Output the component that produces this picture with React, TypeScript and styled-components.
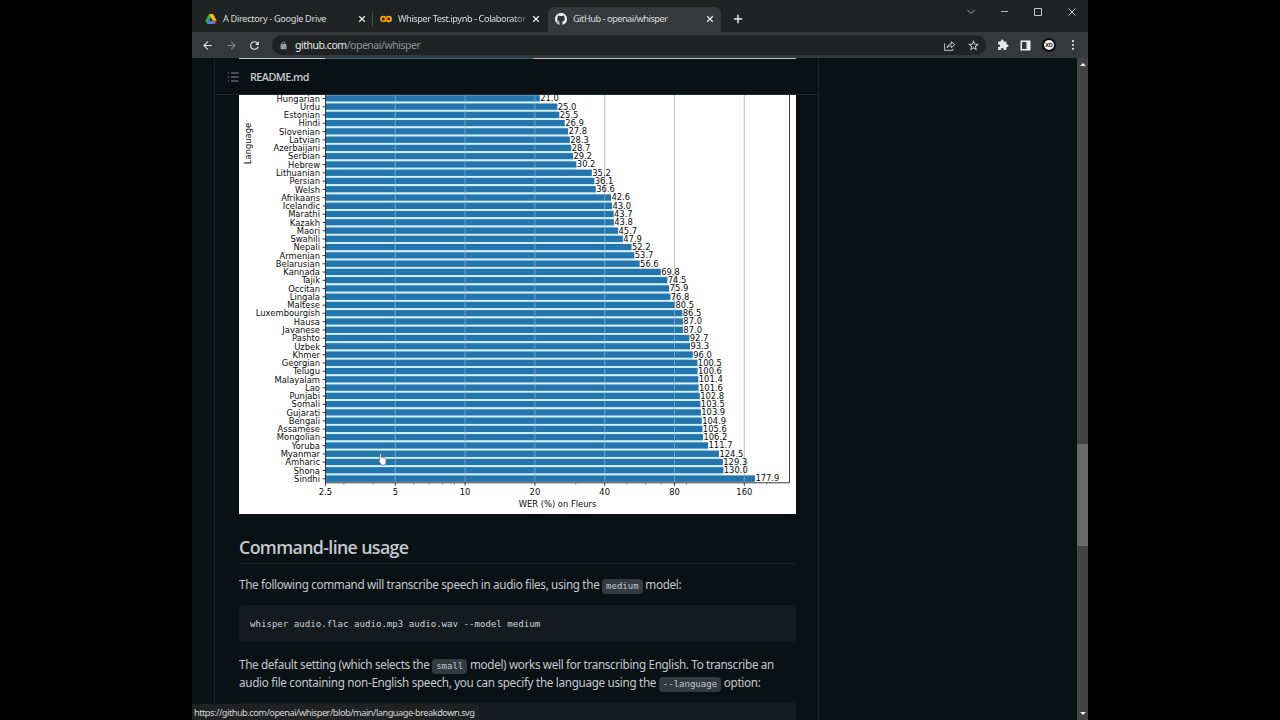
import React from "react";
import styled, { createGlobalStyle } from "styled-components";

const Global = createGlobalStyle`
  * { box-sizing: border-box; }
  body { margin: 0; background: #000; overflow: hidden; }
`;

const UI_FONT = `"Noto Sans", "Open Sans", sans-serif`;
const MONO_FONT = `"DejaVu Sans Mono", "Liberation Mono", monospace`;

const Desktop = styled.div`
  width: 1280px;
  height: 720px;
  background: #000;
  display: flex;
  justify-content: center;
  font-family: ${UI_FONT};
`;
const Browser = styled.div`
  width: 896px;
  height: 720px;
  display: flex;
  flex-direction: column;
  position: relative;
  background: #0a1114;
`;
const TabStrip = styled.div`
  height: 32px;
  flex: none;
  background: #202323;
  display: flex;
  align-items: flex-end;
`;
const Tab = styled.div<{ $w: number; $left: number; $right: number; $active?: boolean; $divider?: boolean }>`
  width: ${(p) => p.$w}px;
  height: 25px;
  padding: 0 ${(p) => p.$right}px 1px ${(p) => p.$left}px;
  display: flex;
  align-items: center;
  background: ${(p) => (p.$active ? "#36393b" : "transparent")};
  border-radius: 6px 6px 0 0;
  background-image: ${(p) => (p.$divider ? "linear-gradient(#4a4d50, #4a4d50)" : "none")};
  background-size: 1px 15px;
  background-position: right 5px;
  background-repeat: no-repeat;
`;
const TabTitle = styled.span<{ $ls: number; $fade?: boolean }>`
  margin-left: 6px;
  padding-bottom: 1px;
  flex: 1;
  min-width: 0;
  white-space: nowrap;
  font-size: 9.2px;
  line-height: 14px;
  letter-spacing: ${(p) => p.$ls}px;
  color: #dadcde;
  ${(p) => p.$fade && "mask-image: linear-gradient(90deg, #000 86%, rgba(0,0,0,.25) 97%);"}
`;
const NewTab = styled.div`
  width: 34px;
  height: 25px;
  padding-bottom: 1px;
  display: flex;
  align-items: center;
  justify-content: center;
`;
const WindowControls = styled.div`
  margin-left: auto;
  align-self: flex-start;
  height: 23px;
  display: flex;
  align-items: center;
  gap: 22px;
  padding-right: 10px;
`;
const Toolbar = styled.div`
  height: 26px;
  flex: none;
  background: #36393b;
  display: flex;
  align-items: center;
  padding: 0 9px 0 9px;
`;
const NavIcons = styled.div`
  width: 71px;
  display: flex;
  gap: 10.5px;
`;
const Omnibox = styled.div`
  width: 714px;
  height: 20px;
  border-radius: 10px;
  background: #202324;
  display: flex;
  align-items: center;
  padding: 0 6px 0 7px;
`;
const Url = styled.span`
  margin-left: 7px;
  flex: 1;
  font-size: 10.5px;
  line-height: 14px;
  letter-spacing: -0.48px;
  color: #e6e8ea;
  white-space: nowrap;
`;
const UrlPath = styled.span`
  color: #8d9195;
`;
const OmniActions = styled.div`
  display: flex;
  gap: 11px;
`;
const Extensions = styled.div`
  display: flex;
  align-items: center;
  justify-content: space-between;
  width: 82px;
  margin-left: 11px;
`;
const Avatar = styled.div`
  width: 14px;
  height: 14px;
  flex: none;
  border-radius: 50%;
  border: 2px solid #0a0a0a;
  background: #f2f2f2;
  color: #111;
  font: bold 5.5px/10px "Liberation Sans", sans-serif;
  text-align: center;
`;
const Viewport = styled.div`
  flex: 1;
  min-height: 0;
  display: flex;
`;
const Page = styled.div`
  flex: 1;
  overflow: hidden;
  padding-left: 22px;
`;
const ReadmeBox = styled.article`
  width: 605px;
  height: 662px;
  border: solid #1c2226;
  border-width: 0 1px;
  overflow: hidden;
`;
const ChartEdge = styled.div`
  height: 1px;
  margin: 0 22px 0 24px;
  background: linear-gradient(90deg, #c4c8ca 86px, #2f6488 86px, #2f6488 294px, #b9bdbf 294px);
`;
const ReadmeHeader = styled.header`
  height: 36px;
  border-bottom: 1px solid #22282c;
  display: flex;
  align-items: center;
  padding: 0 0 0 12px;
  gap: 11px;
`;
const FileName = styled.span`
  font-family: "Open Sans", "Noto Sans", sans-serif;
  font-size: 10.8px;
  font-weight: 600;
  line-height: 16px;
  letter-spacing: -0.55px;
  color: #c6cbd0;
`;
const Markdown = styled.div`
  padding: 0 22px 0 24px;
  color: #c3c9ce;
`;
const ChartSvg = styled.svg`
  display: block;
  width: 557px;
  height: 419px;
  background: #fff;
  font-family: "DejaVu Sans", sans-serif;
`;
const Heading = styled.h2`
  margin: 22px 0 11px;
  height: 28px;
  border-bottom: 1px solid #192024;
  font-family: "Open Sans", "Noto Sans", sans-serif;
  font-size: 17.8px;
  font-weight: 600;
  line-height: 23px;
  letter-spacing: -0.64px;
`;
const Paragraph = styled.p<{ $after: number }>`
  margin: 0 0 ${(p) => p.$after}px;
  font-size: 11.7px;
  line-height: 18px;
  white-space: nowrap;
`;
const Line = styled.span<{ $ls: number }>`
  display: block;
  height: 18px;
  letter-spacing: ${(p) => p.$ls}px;
`;
const Code = styled.code`
  padding: 2px 4px 3px;
  border-radius: 4px;
  background: #343a40;
  font-family: ${MONO_FONT};
  font-size: 9px;
  line-height: 10px;
  letter-spacing: 0;
`;
const Pre = styled.pre`
  height: 37px;
  margin: 0 0 13px;
  padding: 0 11px;
  border-radius: 4px;
  background: #141a1e;
  font-family: ${MONO_FONT};
  font-size: 9.1px;
  line-height: 38px;
  color: #d0d5d9;
`;
const ScrollTrack = styled.div`
  width: 11px;
  flex: none;
  background: #424344;
  display: flex;
  flex-direction: column;
  align-items: center;
`;
const ScrollArrow = styled.div<{ $down?: boolean }>`
  margin: ${(p) => (p.$down ? "auto 0 5px" : "5px 0 0")};
  border: solid transparent;
  border-width: ${(p) => (p.$down ? "3px 3px 0" : "0 3px 3px")};
  border-${(p) => (p.$down ? "top" : "bottom")}-color: #f0f0f0;
`;
const ScrollThumb = styled.div`
  width: 11px;
  height: 102px;
  margin-top: 378px;
  background: #696a6c;
`;
const StatusBubble = styled.div`
  position: absolute;
  left: 0;
  bottom: 0;
  height: 16px;
  width: 287px;
  padding-left: 2px;
  background: #1f2122;
  border-top-right-radius: 3px;
  color: #d5d7d9;
  font-size: 9.2px;
  line-height: 17px;
  letter-spacing: -0.48px;
  white-space: nowrap;
`;
const Pointer = styled.svg`
  position: absolute;
  left: 186px;
  top: 453px;
`;

const DriveIcon = () => (
  <svg width="12" height="12" viewBox="0 0 24 24">
    <path d="M8 2h8l-4 7z" fill="#188038" />
    <path d="M8 2 0.5 15.5 4.5 22 12 9z" fill="#34a853" />
    <path d="M8 2h8l7.5 13.5h-8z" fill="#fbbc04" />
    <path d="M4.5 22 8.3 15.5h7.4L19.5 22z" fill="#4285f4" />
    <path d="M15.5 15.5h8L19.5 22z" fill="#ea4335" />
  </svg>
);
const ColabIcon = () => (
  <svg width="12" height="12" viewBox="0 0 24 24" fill="none" strokeWidth="3.6">
    <circle cx="6.6" cy="12" r="4.6" stroke="#f9ab00" />
    <circle cx="17.4" cy="12" r="4.6" stroke="#f9ab00" />
    <path d="M3.4 15.3a4.6 4.6 0 0 0 6.4 0M14.2 8.7a4.6 4.6 0 0 0 0 6.6" stroke="#e8710a" />
  </svg>
);
const GithubIcon = () => (
  <svg width="12" height="12" viewBox="0 0 16 16" fill="#f5f6f7">
    <path d="M8 0C3.58 0 0 3.58 0 8c0 3.54 2.29 6.53 5.47 7.59.4.07.55-.17.55-.38 0-.19-.01-.82-.01-1.49-2.01.37-2.53-.49-2.69-.94-.09-.23-.48-.94-.82-1.13-.28-.15-.68-.52-.01-.53.63-.01 1.08.58 1.23.82.72 1.21 1.87.87 2.33.66.07-.52.28-.87.51-1.07-1.78-.2-3.64-.89-3.64-3.95 0-.87.31-1.59.82-2.15-.08-.2-.36-1.02.08-2.12 0 0 .67-.21 2.2.82.64-.18 1.32-.27 2-.27s1.36.09 2 .27c1.53-1.04 2.2-.82 2.2-.82.44 1.1.16 1.92.08 2.12.51.56.82 1.27.82 2.15 0 3.07-1.87 3.75-3.65 3.95.29.25.54.73.54 1.48 0 1.07-.01 1.93-.01 2.2 0 .21.15.46.55.38A8.01 8.01 0 0 0 16 8c0-4.42-3.58-8-8-8z" />
  </svg>
);
const CloseIcon = () => (
  <svg width="10" height="10" viewBox="0 0 10 10" stroke="#e4e6e8" strokeWidth="1.3">
    <path d="M2.2 2.2l5.6 5.6M7.8 2.2L2.2 7.8" />
  </svg>
);
const MaterialIcon = ({ d, size = 13, color = "#e4e6e8" }: { d: string; size?: number; color?: string }) => (
  <svg width={size} height={size} viewBox="0 0 24 24" fill={color}>
    <path d={d} />
  </svg>
);
const ICONS = {
  back: "M20 11H7.83l5.59-5.59L12 4l-8 8 8 8 1.41-1.41L7.83 13H20v-2z",
  forward: "M12 4l-1.41 1.41L16.17 11H4v2h12.17l-5.58 5.59L12 20l8-8z",
  reload:
    "M17.65 6.35A7.96 7.96 0 0 0 12 4a8 8 0 1 0 7.73 10h-2.08A6 6 0 1 1 12 6c1.66 0 3.14.69 4.22 1.78L13 11h7V4l-2.35 2.35z",
  lock: "M18 8h-1V6A5 5 0 0 0 7 6v2H6a2 2 0 0 0-2 2v10c0 1.1.9 2 2 2h12a2 2 0 0 0 2-2V10a2 2 0 0 0-2-2zM9 6a3 3 0 0 1 6 0v2H9V6z",
  star: "M22 9.24l-7.19-.62L12 2 9.19 8.63 2 9.24l5.46 4.73L5.82 21 12 17.27 18.18 21l-1.63-7.03L22 9.24zM12 15.4l-3.76 2.27 1-4.28-3.32-2.88 4.38-.38L12 6.1l1.71 4.04 4.38.38-3.32 2.88 1 4.28L12 15.4z",
  puzzle:
    "M20.5 11H19V7a2 2 0 0 0-2-2h-4V3.5a2.5 2.5 0 0 0-5 0V5H4a2 2 0 0 0-2 2v3.8h1.5a2.7 2.7 0 0 1 0 5.4H2V20c0 1.1.9 2 2 2h3.8v-1.5a2.7 2.7 0 0 1 5.4 0V22H17a2 2 0 0 0 2-2v-4h1.5a2.5 2.5 0 0 0 0-5z",
  more: "M12 6.5a2.2 2.2 0 1 0 0-4.4 2.2 2.2 0 0 0 0 4.4zm0 3.3a2.2 2.2 0 1 0 0 4.4 2.2 2.2 0 0 0 0-4.4zm0 7.7a2.2 2.2 0 1 0 0 4.4 2.2 2.2 0 0 0 0-4.4z",
};

const DATA: [string, number][] = [
  ["Hungarian", 21.0], ["Urdu", 25.0], ["Estonian", 25.5], ["Hindi", 26.9], ["Slovenian", 27.8],
  ["Latvian", 28.3], ["Azerbaijani", 28.7], ["Serbian", 29.2], ["Hebrew", 30.2], ["Lithuanian", 35.2],
  ["Persian", 36.1], ["Welsh", 36.6], ["Afrikaans", 42.6], ["Icelandic", 43.0], ["Marathi", 43.7],
  ["Kazakh", 43.8], ["Maori", 45.7], ["Swahili", 47.9], ["Nepali", 52.2], ["Armenian", 53.7],
  ["Belarusian", 56.6], ["Kannada", 69.8], ["Tajik", 74.5], ["Occitan", 75.9], ["Lingala", 76.8],
  ["Maltese", 80.5], ["Luxembourgish", 86.5], ["Hausa", 87.0], ["Javanese", 87.0], ["Pashto", 92.7],
  ["Uzbek", 93.3], ["Khmer", 96.0], ["Georgian", 100.5], ["Telugu", 100.6], ["Malayalam", 101.4],
  ["Lao", 101.6], ["Punjabi", 102.8], ["Somali", 103.5], ["Gujarati", 103.9], ["Bengali", 104.9],
  ["Assamese", 105.6], ["Mongolian", 106.2], ["Yoruba", 111.7], ["Myanmar", 124.5], ["Amharic", 129.3],
  ["Shona", 130.0], ["Sindhi", 177.9],
];
const AXIS_X = 86.5;
const AXIS_Y = 387.8;
const RIGHT_X = 550.5;
const xOf = (v: number) => AXIS_X + Math.log2(v / 2.5) * 69.8;
const rowY = (i: number) => 3.5 + i * 8.265;
const MAJOR = [2.5, 5, 10, 20, 40, 80, 160];
const MINOR = [3, 4, 6, 7, 8, 9, 30, 50, 60, 70, 90, 200];

const WerChart = () => (
  <ChartSvg viewBox="0 0 557 419">
    {MAJOR.slice(1).map((v) => (
      <path key={v} d={`M${xOf(v)} 0V${AXIS_Y}`} stroke="#c4c4c4" strokeWidth="1.1" />
    ))}
    {DATA.map(([name, v], i) => (
      <g key={name}>
        {i > 0 && (
          <rect x={AXIS_X} y={rowY(i) - 5.2} width={xOf(DATA[i - 1][1]) - AXIS_X} height="2.2" fill="#d3f1fa" />
        )}
        <rect x={AXIS_X} y={rowY(i) - 3.3} width={xOf(v) - AXIS_X} height="6.5" fill="#2376ad" />
      </g>
    ))}
    {MAJOR.slice(1).map((v) => {
      const first = DATA.findIndex((d) => d[1] > v);
      return (
        <path key={v} d={`M${xOf(v)} ${Math.max(0, rowY(first) - 3.3)}V${AXIS_Y}`} stroke="#8fbad8" strokeOpacity="0.75" strokeWidth="0.9" />
      );
    })}
    <path d={`M${AXIS_X} 0V${AXIS_Y}H${RIGHT_X}V0`} fill="none" stroke="#222" strokeWidth="0.9" />
    {MAJOR.map((v) => (
      <g key={v}>
        <path d={`M${xOf(v)} ${AXIS_Y}v3`} stroke="#222" strokeWidth="0.9" />
        <text x={xOf(v)} y="400.3" fontSize="8.4" textAnchor="middle" fill="#0c0c0c">{v}</text>
      </g>
    ))}
    {MINOR.map((v) => (
      <path key={v} d={`M${xOf(v)} ${AXIS_Y}v1.8`} stroke="#444" strokeWidth="0.6" />
    ))}
    {DATA.map(([name, v], i) => (
      <g key={name} fontSize="8.4" fill="#0c0c0c">
        <path d={`M${AXIS_X - 3} ${rowY(i)}h3`} stroke="#222" strokeWidth="0.9" />
        <text x="81" y={rowY(i) + 3.1} textAnchor="end">{name}</text>
        <text x={xOf(v) + 0.4} y={rowY(i) + 2.8}>{v.toFixed(1)}</text>
      </g>
    ))}
    <text x="318.5" y="411.8" fontSize="8.4" textAnchor="middle" fill="#0c0c0c">WER (%) on Fleurs</text>
    <text transform="translate(12.200 48.500) rotate(-90)" fontSize="8.4" textAnchor="middle" fill="#0c0c0c">Language</text>
  </ChartSvg>
);

export default function App() {
  return (
    <Desktop>
      <Global />
      <Browser>
        <TabStrip>
          <Tab $w={181} $left={13} $right={6} $divider>
            <DriveIcon />
            <TabTitle $ls={-0.33}>A Directory - Google Drive</TabTitle>
            <CloseIcon />
          </Tab>
          <Tab $w={175} $left={7} $right={7}>
            <ColabIcon />
            <TabTitle $ls={-0.42} $fade>Whisper Test.ipynb - Colaborator</TabTitle>
            <CloseIcon />
          </Tab>
          <Tab $w={173} $left={7} $right={6} $active>
            <GithubIcon />
            <TabTitle $ls={-0.48}>GitHub - openai/whisper</TabTitle>
            <CloseIcon />
          </Tab>
          <NewTab>
            <svg width="10" height="10" viewBox="0 0 10 10" stroke="#e8eaec" strokeWidth="1.5">
              <path d="M5 .8v8.4M.8 5h8.4" />
            </svg>
          </NewTab>
          <WindowControls>
            <svg width="12" height="12" viewBox="0 0 12 12" fill="none" stroke="#a9acae"><path d="M3.5 4L7 7.5 10.5 4" /></svg>
            <svg width="12" height="12" viewBox="0 0 12 12" stroke="#b9bcbe"><path d="M3 5.5h7" /></svg>
            <svg width="12" height="12" viewBox="0 0 12 12" fill="none" stroke="#c9cccd"><path d="M2.5 2.5h7v7h-7z" /></svg>
            <svg width="12" height="12" viewBox="0 0 12 12" stroke="#c9cccd"><path d="M2.5 2.5l7 7M9.5 2.5l-7 7" /></svg>
          </WindowControls>
        </TabStrip>
        <Toolbar>
          <NavIcons>
            <MaterialIcon d={ICONS.back} />
            <MaterialIcon d={ICONS.forward} color="#7e8285" />
            <MaterialIcon d={ICONS.reload} />
          </NavIcons>
          <Omnibox>
            <MaterialIcon d={ICONS.lock} size={9} color="#9a9da0" />
            <Url>github.com<UrlPath>/openai/whisper</UrlPath></Url>
            <OmniActions>
              <svg width="13" height="13" viewBox="0 0 12 12" fill="none" stroke="#c5c8ca" strokeWidth="0.9">
                <path d="M1.5 4v6.5H9V9" />
                <path d="M3.8 8c.3-2.3 1.7-3.4 4-3.5v-2L11 5.3 7.8 8V6.300c-1.700 0-3 .5-4 1.700z" />
              </svg>
              <MaterialIcon d={ICONS.star} size={13} color="#d5d8da" />
            </OmniActions>
          </Omnibox>
          <Extensions>
            <MaterialIcon d={ICONS.puzzle} size={12} />
            <svg width="11" height="11" viewBox="0 0 11 11"><path d="M.5.5h10v10H.5z" fill="#eceeef" /><path d="M2 2h4.500v7H2z" fill="#36393b" /></svg>
            <Avatar>XD</Avatar>
            <MaterialIcon d={ICONS.more} size={12} />
          </Extensions>
        </Toolbar>
        <Viewport>
          <Page>
            <ReadmeBox>
              <ChartEdge />
              <ReadmeHeader>
                <svg width="12" height="12" viewBox="0 0 12 12" stroke="#878e95" strokeWidth="1">
                  <path d="M4 2h7.500M4 6h7.500M4 10h7.500M.8 2h1.200M.8 6h1.200M.8 10h1.200" />
                </svg>
                <FileName>README.md</FileName>
              </ReadmeHeader>
              <Markdown>
                <WerChart />
                <Heading>Command-line usage</Heading>
                <Paragraph $after={12}>
                  <Line $ls={-0.34}>The following command will transcribe speech in audio files, using the <Code>medium</Code> model:</Line>
                </Paragraph>
                <Pre>whisper audio.flac audio.mp3 audio.wav --model medium</Pre>
                <Paragraph $after={11}>
                  <Line $ls={-0.34}>The default setting (which selects the <Code>small</Code> model) works well for transcribing English. To transcribe an</Line>
                  <Line $ls={-0.31}>audio file containing non-English speech, you can specify the language using the <Code>--language</Code> option:</Line>
                </Paragraph>
                <Pre />
              </Markdown>
            </ReadmeBox>
          </Page>
          <ScrollTrack>
            <ScrollArrow />
            <ScrollThumb />
            <ScrollArrow $down />
          </ScrollTrack>
        </Viewport>
        <StatusBubble>https://github.com/openai/whisper/blob/main/language-breakdown.svg</StatusBubble>
        <Pointer width="9" height="13" viewBox="0 0 9 13">
          <path d="M2 .8c.9-.3 1.300.3 1.300 1.200v2.300l3.700.8c1 .3 1.300.8 1.200 1.800l-.4 3.200c-.2 1.400-.9 2-2.200 2H4.300c-.8 0-1.300-.3-1.700-1L.8 7.800c-.3-.7.300-1.200.9-.8V1.500c0-.3.1-.6.3-.7z" fill="#fff" stroke="#334" strokeWidth=".5" />
        </Pointer>
      </Browser>
    </Desktop>
  );
}
